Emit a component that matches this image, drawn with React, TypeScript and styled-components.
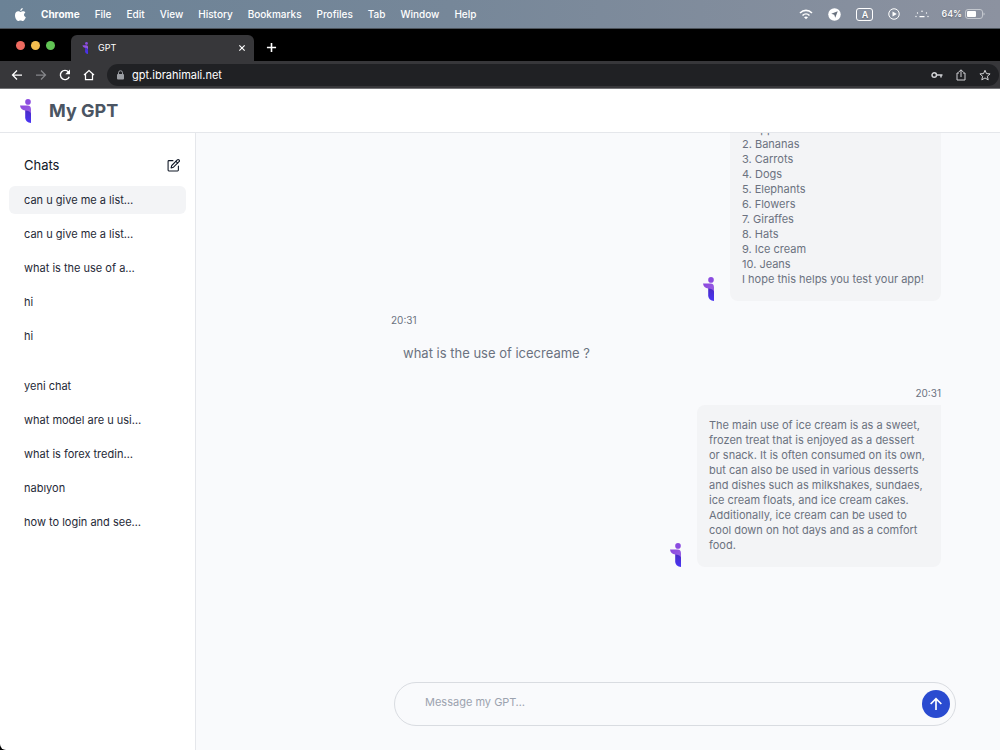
import React from 'react';
import styled, { createGlobalStyle } from 'styled-components';

const GlobalStyle = createGlobalStyle`
  *, *::before, *::after { box-sizing: border-box; }
  body { margin: 0; background: #000; font-family: Inter, "Liberation Sans", sans-serif; }
  button, input { font: inherit; }
  button { border: 0; padding: 0; background: none; color: inherit; }
  a { color: inherit; text-decoration: none; }
  h1, h2, p, ul { margin: 0; padding: 0; }
  ul { list-style: none; }
  svg { display: block; flex: none; }
`;

const Screen = styled.div`
  display: flex;
  flex-direction: column;
  height: 100vh;
  overflow: hidden;
`;

/* System menu bar */

const MenuBar = styled.nav`
  display: flex;
  align-items: center;
  flex: none;
  height: 29px;
  padding: 0 0 0 15px;
  overflow: hidden;
  background: linear-gradient(90deg, #6b8296, #768799 45%, #8c92a0);
  border-bottom: 1px solid #4c535b;
  color: #fff;
  font-size: 10px;
  font-weight: 500;
  line-height: 14px;
  text-shadow: 0 1px 2px rgba(0, 0, 0, 0.35);
`;

const MenuList = styled.ul`
  display: flex;
  gap: 15px;
  padding-left: 15px;
`;

const MenuButton = styled.button<{ $strong?: boolean }>`
  font-weight: ${(p) => (p.$strong ? 700 : 500)};
`;

const Status = styled.div`
  display: flex;
  align-items: center;
  gap: 15px;
  margin-left: auto;
  padding-right: 15px;
`;

const InputSource = styled.span`
  width: 17px;
  height: 13px;
  border: 1px solid #fff;
  border-radius: 3px;
  font-size: 9px;
  font-weight: 600;
  line-height: 11px;
  text-align: center;
`;

const Battery = styled.span`
  display: flex;
  align-items: center;
  gap: 3px;
  margin-left: -3px;
  font-size: 9px;
`;

/* Browser window */

const Browser = styled.div`
  display: flex;
  flex-direction: column;
  flex: 1;
  min-height: 0;
  border-radius: 6px 0 0 6px;
  overflow: hidden;
`;

const TabStrip = styled.div`
  display: flex;
  align-items: flex-end;
  flex: none;
  height: 32px;
  background: #000;
  color: #fff;
`;

const Lights = styled.div`
  display: flex;
  gap: 6px;
  width: 71px;
  padding: 0 0 11px 16px;
`;

const Light = styled.button<{ $color: string }>`
  width: 9px;
  height: 9px;
  border-radius: 50%;
  background: ${(p) => p.$color};
`;

const Tab = styled.div`
  display: flex;
  align-items: center;
  width: 183px;
  height: 26px;
  padding: 0 8px 0 11px;
  border-radius: 6px 6px 0 0;
  background: #37373a;
  font-size: 9px;
  line-height: 12px;
`;

const TabTitle = styled.span`
  flex: 1;
  padding-left: 9px;
`;

const NewTab = styled.button`
  padding: 0 0 8px 12px;
`;

const Toolbar = styled.div`
  display: flex;
  align-items: center;
  gap: 12px;
  flex: none;
  height: 28px;
  padding: 0 1px 0 11px;
  background: #37373a;
  border-bottom: 1px solid #737477;
  color: #fff;
`;

const Address = styled.form`
  display: flex;
  align-items: center;
  flex: 1;
  min-width: 0;
  height: 22px;
  padding: 0 8px 0 9px;
  gap: 7px;
  border-radius: 11px;
  background: #202124;
`;

const AddressInput = styled.input`
  flex: 1;
  min-width: 0;
  padding: 0;
  border: 0;
  outline: 0;
  background: none;
  color: #fff;
  font-family: Inter, "Liberation Sans", sans-serif;
  font-size: 11px;
  line-height: 16px;
`;

const AddressActions = styled.div`
  display: flex;
  align-items: center;
  gap: 12px;
  color: #d0d1d4;
`;

/* Chat application */

const Page = styled.div`
  display: flex;
  flex-direction: column;
  flex: 1;
  min-height: 0;
  background: #fff;
`;

const Header = styled.header`
  display: flex;
  align-items: center;
  flex: none;
  gap: 17px;
  height: 44px;
  padding-left: 20px;
  border-bottom: 1px solid #e5e7eb;
`;

const Title = styled.h1`
  color: #4b5563;
  font-size: 18px;
  font-weight: 700;
  line-height: 28px;
`;

const Columns = styled.div`
  display: flex;
  flex: 1;
  min-height: 0;
`;

const Sidebar = styled.aside`
  flex: none;
  width: 196px;
  padding: 23px 9px 0;
  border-right: 1px solid #e5e7eb;
`;

const SidebarHead = styled.div`
  display: flex;
  align-items: center;
  justify-content: space-between;
  height: 18px;
  margin-bottom: 12px;
  padding: 0 6px 0 15px;
  color: #111827;
`;

const SidebarTitle = styled.h2`
  font-size: 13px;
  font-weight: 400;
  line-height: 18px;
`;

const ChatList = styled.ul`
  display: flex;
  flex-direction: column;
  gap: 6px;
  margin-bottom: 22px;
`;

const ChatLink = styled.a<{ $active?: boolean }>`
  display: block;
  padding: 6px 15px;
  border-radius: 6px;
  background: ${(p) => (p.$active ? '#f3f4f6' : 'transparent')};
  color: #1f2937;
  font-size: 11px;
  line-height: 16px;
  white-space: nowrap;
`;

const Main = styled.main`
  display: flex;
  flex-direction: column;
  flex: 1;
  min-width: 0;
  padding-bottom: 24px;
  background: #f9fafc;
`;

const Thread = styled.section`
  display: flex;
  flex-direction: column;
  justify-content: flex-end;
  flex: 1;
  min-height: 0;
  padding: 0 59px 115px 195px;
  overflow: hidden;
  color: #6b7280;
  font-size: 11px;
  line-height: 15px;
`;

const Reply = styled.article`
  display: flex;
  align-items: flex-end;
  justify-content: flex-end;
  gap: 15px;
`;

const Bubble = styled.p<{ $width: number }>`
  width: ${(p) => p.$width}px;
  padding: 13px 12px 14px;
  border-radius: 8px 0 8px 8px;
  background: #f3f4f6;
  white-space: pre;
`;

const Time = styled.time<{ $end?: boolean }>`
  display: block;
  padding: ${(p) => (p.$end ? '0 0 4px' : '12px 0 4px')};
  font-size: 10px;
  text-align: ${(p) => (p.$end ? 'right' : 'left')};
`;

const Question = styled.p`
  padding: 12px 12px 24px;
  font-size: 13px;
  line-height: 18px;
`;

const Composer = styled.form`
  display: flex;
  align-items: center;
  height: 44px;
  margin: 0 44px 0 198px;
  padding: 0 5px 0 30px;
  border: 1px solid #d9dce1;
  border-radius: 22px;
`;

const MessageInput = styled.input`
  flex: 1;
  min-width: 0;
  padding: 0 0 4px;
  border: 0;
  outline: 0;
  background: none;
  color: #4b5563;
  font-size: 11px;
  line-height: 16px;
  &::placeholder { color: #9ca3af; opacity: 1; }
`;

const SendButton = styled.button`
  display: grid;
  place-items: center;
  width: 28px;
  height: 28px;
  border-radius: 50%;
  background: #2a4bd0;
  color: #fff;
`;

function Logo({ width = 12, height = 24 }: { width?: number; height?: number }) {
  return (
    <svg width={width} height={height} viewBox="0 0 12 24" aria-hidden="true">
      <defs>
        <linearGradient id="arm" x1="0" y1="0" x2="1" y2="1">
          <stop offset="0" stopColor="#8b46dc" />
          <stop offset="1" stopColor="#9a63e6" />
        </linearGradient>
        <linearGradient id="stem" x1="0" y1="0" x2="0" y2="1">
          <stop offset="0" stopColor="#4a2bc4" />
          <stop offset="1" stopColor="#4a35f5" />
        </linearGradient>
      </defs>
      <path d="M5.2 11H11V24C7.600 23.800 5.600 22 5.200 19Z" fill="url(#stem)" />
      <path d="M0 6.6H7.5C10 6.6 11 8 11 10.5V14.5C10 12 8 12 5.2 11.6C2.2 11.400 0.4 9.6 0 6.6Z" fill="url(#arm)" />
      <circle cx="8" cy="2.9" r="2.800" fill="#8b4be0" />
    </svg>
  );
}

function Stroke({ d, size = 12, width = 2, color = 'currentColor' }: { d: string; size?: number; width?: number; color?: string }) {
  return (
    <svg width={size} height={size} viewBox="0 0 24 24" fill="none" stroke={color} strokeWidth={width} aria-hidden="true">
      <path d={d} />
    </svg>
  );
}

function Apple() {
  return (
    <svg width="11" height="13" viewBox="0 0 22 26" fill="#fff" aria-hidden="true">
      <path d="M15.5 0c.2 3-2.300 6-5 6C10.200 3 12.800.4 15.500 0ZM20.800 9c-4 2.400-3.400 7.800.9 9.500C20.400 22 18 26 15.500 26c-1.800 0-2.400-1.100-4.500-1.100S8.200 26 6.600 26C3 26 0 19.500 0 14.500 0 9.500 3 6.600 6.300 6.600c2 0 3.400 1.200 4.900 1.200 1.300 0 2.800-1.300 5.300-1.300 1.700 0 3.400 1 4.300 2.500Z" />
    </svg>
  );
}

const menus = ['Chrome', 'File', 'Edit', 'View', 'History', 'Bookmarks', 'Profiles', 'Tab', 'Window', 'Help'];

const chatGroups = [
  ['can u give me a list…', 'can u give me a list…', 'what is the use of a…', 'hi', 'hi'],
  ['yeni chat', 'what model are u usi…', 'what is forex tredin…', 'nabıyon', 'how to login and see…'],
];

const wordList = [
  '1. Apples', '2. Bananas', '3. Carrots', '4. Dogs', '5. Elephants', '6. Flowers',
  '7. Giraffes', '8. Hats', '9. Ice cream', '10. Jeans', 'I hope this helps you test your app!',
].join('\n');

const answer = [
  'The main use of ice cream is as a sweet,',
  'frozen treat that is enjoyed as a dessert',
  'or snack. It is often consumed on its own,',
  'but can also be used in various desserts',
  'and dishes such as milkshakes, sundaes,',
  'ice cream floats, and ice cream cakes.',
  'Additionally, ice cream can be used to',
  'cool down on hot days and as a comfort',
  'food.',
].join('\n');

function SystemMenu() {
  return (
    <MenuBar>
      <Apple />
      <MenuList>
        {menus.map((name, i) => (
          <li key={name}><MenuButton $strong={i === 0}>{name}</MenuButton></li>
        ))}
      </MenuList>
      <Status>
        <svg width="14" height="11" viewBox="0 0 28 22" fill="none" stroke="#fff" strokeWidth="3.200" aria-hidden="true">
          <path d="M2 8C9 1 19 1 26 8M7 13C11 9 17 9 21 13" />
          <path d="M10 16.500C12.500 14.500 15.500 14.500 18 16.500L14 20.500Z" fill="#fff" stroke="none" />
        </svg>
        <svg width="13" height="13" viewBox="0 0 26 26" aria-hidden="true">
          <circle cx="13" cy="13" r="12.500" fill="#fff" />
          <path d="M19.500 6.500L14.500 19.500L12.500 13.500L6.500 11.500Z" fill="#68717e" />
        </svg>
        <InputSource>A</InputSource>
        <svg width="12" height="12" viewBox="0 0 24 24" aria-hidden="true">
          <circle cx="12" cy="12" r="10.500" fill="none" stroke="#fff" strokeWidth="2" />
          <path d="M9 7L17.500 12L9 17Z" fill="#fff" />
        </svg>
        <svg width="14" height="8" viewBox="0 0 28 16" fill="#fff" aria-hidden="true">
          <rect x="9" y="12" width="10" height="2.500" />
          <circle cx="2" cy="13" r="1.300" /><circle cx="26" cy="13" r="1.300" />
          <circle cx="5" cy="6" r="1.300" /><circle cx="23" cy="6" r="1.300" />
          <circle cx="14" cy="2.500" r="1.500" />
        </svg>
        <Battery>
          64%
          <svg width="20" height="10" viewBox="0 0 20 10" aria-hidden="true">
            <rect x="0.500" y="0.500" width="17" height="9" rx="2.500" fill="none" stroke="#c3c7ce" />
            <rect x="2" y="2" width="9" height="6" rx="1" fill="#fff" />
            <path d="M18.500 3.500V6.500C20 6 20 4 18.500 3.500Z" fill="#c3c7ce" />
          </svg>
        </Battery>
      </Status>
    </MenuBar>
  );
}

function BrowserChrome() {
  return (
    <>
      <TabStrip>
        <Lights>
          <Light $color="#ee6a5f" aria-label="Close window" />
          <Light $color="#f5bd4f" aria-label="Minimize window" />
          <Light $color="#61c454" aria-label="Zoom window" />
        </Lights>
        <Tab>
          <Logo width={7} height={12} />
          <TabTitle>GPT</TabTitle>
          <button aria-label="Close tab"><Stroke size={8} width={3.500} d="M4 4L20 20M20 4L4 20" /></button>
        </Tab>
        <NewTab aria-label="New tab"><Stroke size={11} width={3.500} d="M12 2V22M2 12H22" /></NewTab>
      </TabStrip>
      <Toolbar>
        <button aria-label="Back"><Stroke width={2.500} d="M22 12H3M12 3L3 12L12 21" /></button>
        <button aria-label="Forward"><Stroke width={2.500} color="#85868a" d="M2 12H21M12 3L21 12L12 21" /></button>
        <button aria-label="Reload">
          <svg width="12" height="12" viewBox="0 0 24 24" fill="none" stroke="currentColor" strokeWidth="2.800" aria-hidden="true">
            <path d="M20.500 15.500A9.200 9.200 0 1 1 19 6" />
            <path d="M22 1V10.500H12.500Z" fill="currentColor" stroke="none" />
          </svg>
        </button>
        <button aria-label="Home"><Stroke width={2.500} d="M2 12L12 3L22 12M5 10V21H19V10" /></button>
        <Address onSubmit={(e) => e.preventDefault()}>
          <svg width="9" height="10" viewBox="0 0 18 20" aria-hidden="true">
            <rect x="2" y="8" width="14" height="11" rx="2" fill="#9b9ea3" />
            <path d="M5 9V5.500A4 4 0 0 1 13 5.500V9" fill="none" stroke="#9b9ea3" strokeWidth="2" />
          </svg>
          <AddressInput aria-label="Address" defaultValue="gpt.ibrahimali.net" />
          <AddressActions>
            <button type="button" aria-label="Passwords">
              <svg width="12" height="8" viewBox="0 0 24 16" fill="none" stroke="currentColor" strokeWidth="3" aria-hidden="true">
                <circle cx="6.500" cy="8" r="4.500" />
                <path d="M11 8H23M20 8V13" />
              </svg>
            </button>
            <button type="button" aria-label="Share"><Stroke d="M8 8H4V22H20V8H16M12 16V2M7 6.500L12 1.500L17 6.500" /></button>
            <button type="button" aria-label="Bookmark"><Stroke d="M12 2.500L14.900 9.200L22.200 9.800L16.700 14.600L18.400 21.700L12 17.900L5.600 21.700L7.300 14.600L1.800 9.800L9.100 9.200Z" /></button>
          </AddressActions>
        </Address>
      </Toolbar>
    </>
  );
}

export default function App() {
  return (
    <Screen>
      <GlobalStyle />
      <SystemMenu />
      <Browser>
        <BrowserChrome />
        <Page>
          <Header>
            <Logo />
            <Title>My GPT</Title>
          </Header>
          <Columns>
            <Sidebar>
              <SidebarHead>
                <SidebarTitle>Chats</SidebarTitle>
                <button aria-label="New chat">
                  <svg width="13" height="13" viewBox="0 0 24 24" fill="none" stroke="currentColor" strokeWidth="2" strokeLinecap="round" strokeLinejoin="round" aria-hidden="true">
                    <path d="M11 3H3.500A1.500 1.500 0 0 0 2 4.500V20.500A1.500 1.500 0 0 0 3.500 22H19.500A1.500 1.500 0 0 0 21 20.500V13" />
                    <path d="M19 1.800A2.100 2.100 0 0 1 22.200 5L12 15.200L7.500 16.500L8.800 12Z" />
                    <path d="M16.500 4.300L19.700 7.500" />
                  </svg>
                </button>
              </SidebarHead>
              {chatGroups.map((group, g) => (
                <ChatList key={g}>
                  {group.map((name, i) => (
                    <li key={i}><ChatLink href="#" $active={g === 0 && i === 0}>{name}</ChatLink></li>
                  ))}
                </ChatList>
              ))}
            </Sidebar>
            <Main>
              <Thread>
                <Reply>
                  <Logo />
                  <Bubble $width={211}>{wordList}</Bubble>
                </Reply>
                <Time>20:31</Time>
                <Question>what is the use of icecreame ?</Question>
                <Time $end>20:31</Time>
                <Reply>
                  <Logo />
                  <Bubble $width={244}>{answer}</Bubble>
                </Reply>
              </Thread>
              <Composer onSubmit={(e) => e.preventDefault()}>
                <MessageInput aria-label="Message" placeholder="Message my GPT…" />
                <SendButton aria-label="Send"><Stroke size={16} width={2.500} d="M12 21V4M4 12L12 4L20 12" /></SendButton>
              </Composer>
            </Main>
          </Columns>
        </Page>
      </Browser>
    </Screen>
  );
}
